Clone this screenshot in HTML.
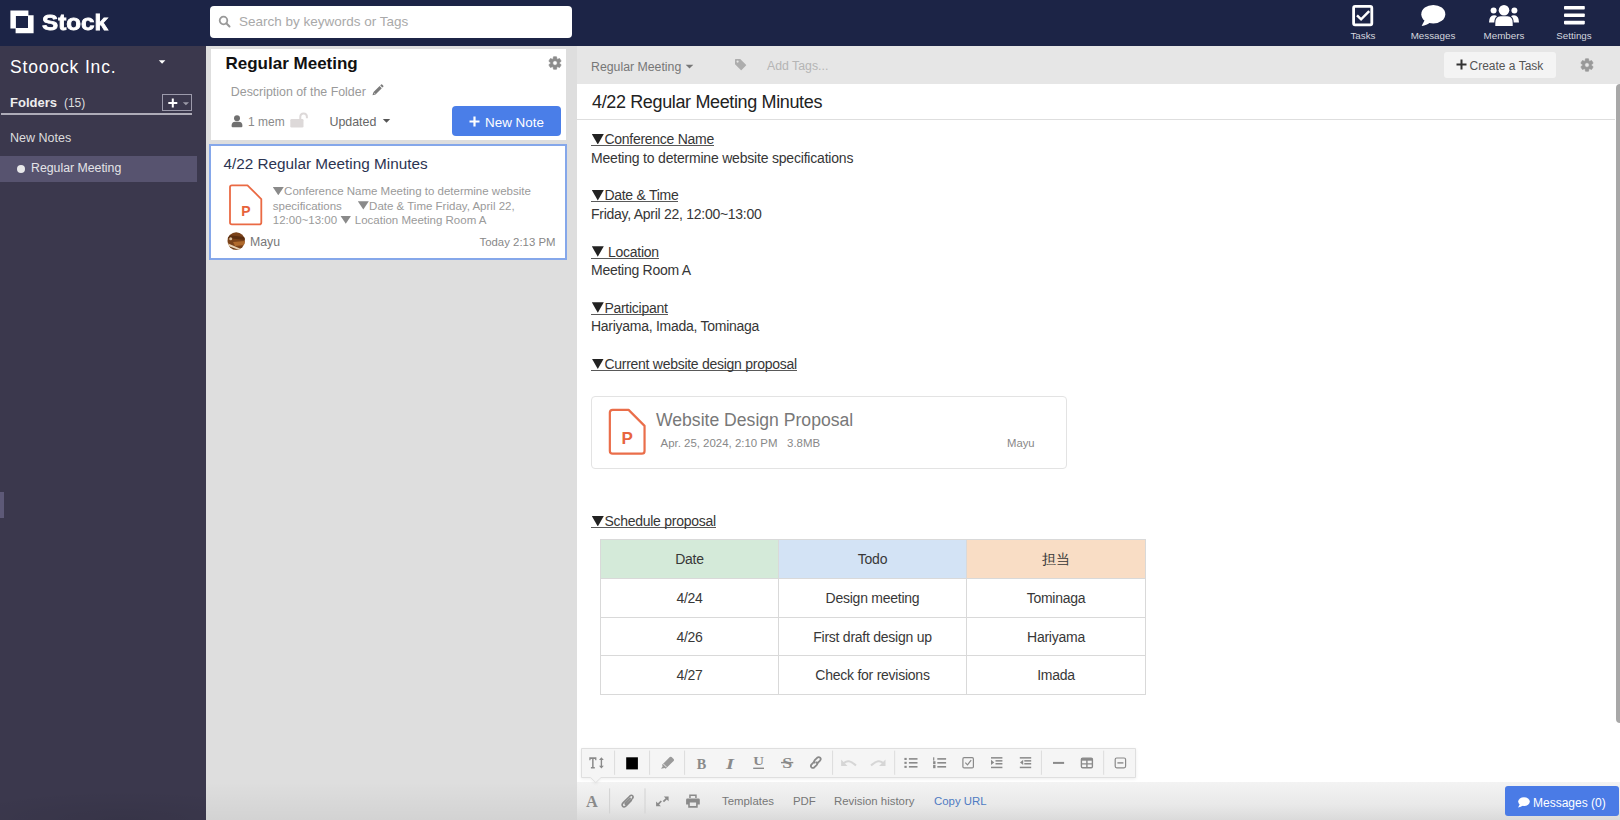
<!DOCTYPE html>
<html><head><meta charset="utf-8">
<style>
*{box-sizing:border-box;margin:0;padding:0}
html,body{width:1620px;height:820px;overflow:hidden;font-family:"Liberation Sans",sans-serif;background:#fff}
.a{position:absolute;white-space:nowrap;line-height:1}
svg.a{display:block}
#hdr{position:absolute;left:0;top:0;width:1620px;height:45.6px;background:#1c2446;z-index:5}
#side{position:absolute;left:0;top:45px;width:205.5px;height:775px;background:#3b384d}
#mid{position:absolute;left:205.5px;top:45px;width:371.5px;height:775px;background:#dedede}
#ed{position:absolute;left:577px;top:45px;width:1043px;height:775px;background:#fff}
.hl{font-size:9.8px;color:#d4d6df;text-align:center;width:70px}
.tri{display:inline-block;width:12px;height:10.5px;background:#222;clip-path:polygon(0 0,100% 0,50% 100%);margin-left:0.8px;margin-right:0.6px;vertical-align:-0.2px}
.tri2{display:inline-block;width:11px;height:8.2px;background:#8a8a8a;clip-path:polygon(0 0,100% 0,50% 100%);margin-right:0.3px;vertical-align:0px}
.body u{text-decoration:none;background:linear-gradient(#595959,#595959) 0 calc(100% - 0.9px)/100% 1.1px no-repeat}
.tbl{border-collapse:collapse;font-size:14px;letter-spacing:-0.25px;color:#383838}
.tbl td{border:1px solid #d9d9d9;text-align:center;height:38.5px;padding:0.8px 0 0 0}
</style></head>
<body>
<div id="hdr">
  <svg class="a" style="left:0;top:0" width="40" height="45" viewBox="0 0 40 45">
    <path fill="#fff" fill-rule="evenodd" d="M10.4 10.4H28.4V15.3H33.6V33.3H15.6V28.4H10.4Z M15.9 15.9H28V28H15.9Z"/>
  </svg>
  <div class="a" id="logo" style="left:42px;top:12px;font-size:22px;font-weight:bold;color:#fff;transform:scaleX(1.1);transform-origin:0 0;-webkit-text-stroke:0.8px #fff">Stock</div>
  <div class="a" style="left:210px;top:6px;width:362px;height:32px;background:#fff;border-radius:4px"></div>
  <svg class="a" style="left:218px;top:15px" width="14" height="14" viewBox="0 0 14 14"><circle cx="5.5" cy="5.5" r="3.8" fill="none" stroke="#999" stroke-width="1.8"/><path d="M8.3 8.3L11.5 11.5" stroke="#999" stroke-width="2" stroke-linecap="round"/></svg>
  <div class="a" style="left:239px;top:15px;font-size:13.5px;color:#a9a9a9">Search by keywords or Tags</div>

  <!-- Tasks -->
  <svg class="a" style="left:1350px;top:3px" width="26" height="26" viewBox="0 0 26 26"><rect x="3.6" y="3.4" width="18.2" height="18.4" rx="1.5" fill="none" stroke="#fff" stroke-width="2.8"/><path d="M7 12.3L11.1 16.3L19.2 8.2" fill="none" stroke="#fff" stroke-width="2.5"/></svg>
  <div class="a hl" style="left:1328px;top:30.6px">Tasks</div>
  <!-- Messages -->
  <svg class="a" style="left:1418px;top:2px" width="30" height="27" viewBox="0 0 30 27"><ellipse cx="15.3" cy="12.2" rx="12" ry="9.3" fill="#fff"/><path d="M7 17.5L3.6 23.9Q9 23.5 12 20.5Z" fill="#fff"/></svg>
  <div class="a hl" style="left:1398px;top:30.6px">Messages</div>
  <!-- Members -->
  <svg class="a" style="left:1486px;top:2px" width="36" height="27" viewBox="0 0 36 27"><circle cx="18" cy="8.2" r="5.3" fill="#fff"/><circle cx="7.6" cy="8.6" r="3" fill="#fff"/><circle cx="28.4" cy="8.6" r="3" fill="#fff"/><path d="M9.3 23.9V21Q9.3 14.3 14.5 14.3H21.5Q26.7 14.3 26.7 21V23.9Z" fill="#fff"/><path d="M3 20.5Q3 13.5 8 13.3Q10.3 13.3 11 14.2Q8.3 16 8.3 20.5Z" fill="#fff"/><path d="M33 20.5Q33 13.5 28 13.3Q25.7 13.3 25 14.2Q27.7 16 27.7 20.5Z" fill="#fff"/></svg>
  <div class="a hl" style="left:1469px;top:30.6px">Members</div>
  <!-- Settings -->
  <svg class="a" style="left:1560px;top:2px" width="30" height="27" viewBox="0 0 30 27"><rect x="4" y="4" width="20.8" height="3.6" rx="0.8" fill="#fff"/><rect x="4" y="11.4" width="20.8" height="3.6" rx="0.8" fill="#fff"/><rect x="4" y="18.8" width="20.8" height="3.6" rx="0.8" fill="#fff"/></svg>
  <div class="a hl" style="left:1539px;top:30.6px">Settings</div>
</div>

<div id="side">
  <div class="a" style="left:0;top:745px;width:206px;height:30px;background:radial-gradient(ellipse 180px 30px at 60% 100%,rgba(0,0,0,0.07),rgba(0,0,0,0))"></div>
  <div class="a" style="left:10px;top:13.5px;font-size:17.5px;color:#fff;letter-spacing:0.85px">Stooock Inc.</div>
  <svg class="a" style="left:158px;top:14px" width="8" height="6" viewBox="0 0 8 6"><path d="M0.8 1.2H7.4L4.1 4.8Z" fill="#fff"/></svg>
  <div class="a" style="left:10px;top:51px;font-size:13px;color:#eee"><b>Folders</b> <span style="font-size:12px;color:#ddd">&nbsp;(15)</span></div>
  <div class="a" style="left:162px;top:49px;width:30px;height:17px;border:1px solid #9c9aab"></div>
  <svg class="a" style="left:166px;top:51.5px" width="26" height="12" viewBox="0 0 26 12"><path d="M6.8 1.5V10.5M2.3 6H11.3" stroke="#fff" stroke-width="2"/><path d="M16.8 5.3H23L19.9 8.3Z" fill="#9c9aa8"/></svg>
  <div class="a" style="left:1px;top:68.2px;width:191px;height:1.8px;background:#aeacb8"></div>
  <div class="a" style="left:10px;top:87px;font-size:12.5px;color:#ddd">New Notes</div>
  <div class="a" style="left:0;top:111px;width:197px;height:25.5px;background:#57536f"></div>
  <div class="a" style="left:17px;top:120px;width:8px;height:8px;border-radius:50%;background:#e8e8ea"></div>
  <div class="a" style="left:31px;top:117px;font-size:12.3px;color:#e4e4e8">Regular Meeting</div>
  <div class="a" style="left:0;top:446.6px;width:4px;height:26px;background:#5d5977"></div>
</div>

<div id="mid">
  <div class="a" style="left:0;top:737px;width:372px;height:38px;background:linear-gradient(rgba(0,0,0,0),rgba(0,0,0,0.05))"></div>
  <div class="a" style="left:5.5px;top:3.5px;width:355.3px;height:91.5px;background:#fff"></div>
  <div class="a" style="left:20px;top:10.2px;font-size:17px;font-weight:bold;color:#111">Regular Meeting</div>
  <svg class="a" style="left:341.6px;top:10.2px" width="16" height="16" viewBox="0 0 16 16"><path fill="#8c8c8c" fill-rule="evenodd" stroke="#8c8c8c" stroke-width="0.7" stroke-linejoin="round" d="M6.00 4.19L6.50 1.78L9.50 1.78L10.00 4.19L10.30 4.36L12.64 3.59L14.14 6.19L12.30 7.83L12.30 8.17L14.14 9.81L12.64 12.41L10.30 11.64L10.00 11.81L9.50 14.22L6.50 14.22L6.00 11.81L5.70 11.64L3.36 12.41L1.86 9.81L3.70 8.17L3.70 7.83L1.86 6.19L3.36 3.59L5.70 4.36ZM10.30 8.00A2.3 2.3 0 1 0 5.70 8.00A2.3 2.3 0 1 0 10.30 8.00Z"/></svg>
  <div class="a" style="left:25.3px;top:41px;font-size:12.4px;color:#9a9a9a">Description of the Folder</div>
  <svg class="a" style="left:166px;top:39px" width="12" height="12" viewBox="0 0 12 12"><path d="M0.5 11.3L1.3 8.3L7.6 2L9.8 4.2L3.5 10.5Z M8.2 1.4L9.1 0.5Q9.6 0.1 10.1 0.5L11.3 1.7Q11.7 2.2 11.3 2.7L10.4 3.6Z" fill="#7a7a7a"/><path d="M1.8 8.6L3.2 10" stroke="#fff" stroke-width="0.6"/></svg>
  <svg class="a" style="left:25.4px;top:69.6px" width="12" height="13" viewBox="0 0 12 13"><circle cx="6" cy="3.2" r="3" fill="#707070"/><path d="M0.6 11.2V10.6Q0.6 6.8 4.2 6.8H7.8Q11.4 6.8 11.4 10.6V11.2Q11.4 12.2 10.4 12.2H1.6Q0.6 12.2 0.6 11.2Z" fill="#707070"/></svg>
  <div class="a" style="left:42.5px;top:71px;font-size:12px;color:#8a8a8a">1 mem</div>
  <svg class="a" style="left:84px;top:67px" width="19" height="17" viewBox="0 0 19 17"><rect x="0.3" y="7" width="13.2" height="8.5" rx="1.3" fill="#ddd9d9"/><path d="M10.3 7.2V5Q10.3 1.4 13.6 1.4Q16.9 1.4 16.9 5V6.2" fill="none" stroke="#ddd9d9" stroke-width="2"/></svg>
  <div class="a" style="left:124px;top:70.5px;font-size:12.4px;color:#666">Updated</div>
  <svg class="a" style="left:176px;top:73px" width="9" height="6" viewBox="0 0 9 6"><path d="M0.8 1H8.2L4.5 4.8Z" fill="#555"/></svg>
  <div class="a" style="left:246.5px;top:61px;width:109.3px;height:29.5px;background:#4a7ee8;border-radius:4px"></div>
  <svg class="a" style="left:263px;top:71px" width="11" height="11" viewBox="0 0 11 11"><path d="M5.5 0.5V10.5M0.5 5.5H10.5" stroke="#fff" stroke-width="2.2"/></svg>
  <div class="a" style="left:279.6px;top:70.5px;font-size:13.4px;color:#fff">New Note</div>

  <div class="a" style="left:3px;top:99px;width:358.5px;height:116px;background:#fff;border:2px solid #85a7ea"></div>
  <div class="a" style="left:18px;top:111px;font-size:15.3px;color:#2c3452">4/22 Regular Meeting Minutes</div>
  <svg class="a" style="left:22.3px;top:138px" width="36" height="44" viewBox="0 0 36 44"><path d="M3.9 2.3H19.5L33.3 16.1V39.4Q33.3 41.3 31.4 41.3H3.9Q2 41.3 2 39.4V4.2Q2 2.3 3.9 2.3Z" fill="#fff" stroke="#ea6a44" stroke-width="1.8" stroke-linejoin="round"/><text x="17.8" y="33.3" font-family="Liberation Sans" font-weight="bold" font-size="14" fill="#e7623b" text-anchor="middle">P</text></svg>
  <div class="a" style="left:67.3px;top:139.3px;font-size:11.5px;color:#9a9a9a;line-height:14.2px"><i class="tri2"></i>Conference Name Meeting to determine website<br>specifications&nbsp;&nbsp;&nbsp;&nbsp;&nbsp;<i class="tri2"></i>Date &amp; Time Friday, April 22,<br>12:00~13:00 <i class="tri2"></i> Location Meeting Room A</div>
  <svg class="a" style="left:21px;top:187px" width="18" height="18" viewBox="0 0 18 18"><defs><clipPath id="av"><circle cx="9.2" cy="9" r="8.7"/></clipPath></defs><g clip-path="url(#av)"><rect width="18" height="18" fill="#7a4219"/><path d="M0 3L18 5V8L0 6Z" fill="#5a2e10"/><path d="M6 10L18 9V13L8 14Z" fill="#b06a2c"/><path d="M0 11L14 17V18H0Z" fill="#e8d2b4"/><path d="M0 13.5L12 18H0Z" fill="#6a3a16"/><circle cx="3.7" cy="6.8" r="1.5" fill="#d8c0a0"/></g></svg>
  <div class="a" style="left:44.5px;top:191px;font-size:12.3px;color:#777">Mayu</div>
  <div class="a" style="left:274px;top:191.5px;font-size:11.4px;color:#888">Today 2:13 PM</div>
</div>
<div id="ed">
  <div class="a" style="left:0;top:0;width:1043px;height:38.5px;background:#e6e6e6"></div>
  <div class="a" style="left:14px;top:16px;font-size:12.3px;color:#777">Regular Meeting</div>
  <svg class="a" style="left:107.5px;top:18.5px" width="9" height="6" viewBox="0 0 9 6"><path d="M0.7 0.8H8.3L4.5 4.6Z" fill="#777"/></svg>
  <svg class="a" style="left:157px;top:13px" width="13" height="13" viewBox="0 0 13 13"><path d="M1 1.6Q1 1 1.6 1H6.2L12 6.8Q12.4 7.2 12 7.6L7.6 12Q7.2 12.4 6.8 12L1 6.2Z" fill="#adadad"/><circle cx="3.6" cy="3.6" r="1.1" fill="#e6e6e6"/></svg>
  <div class="a" style="left:190px;top:15px;font-size:12.3px;color:#b5b5b5">Add Tags...</div>
  <div class="a" style="left:867px;top:7px;width:112px;height:26px;background:#f4f4f4;border-radius:3px"></div>
  <svg class="a" style="left:879px;top:14px" width="11" height="11" viewBox="0 0 11 11"><path d="M5.5 0.5V10.5M0.5 5.5H10.5" stroke="#333" stroke-width="2"/></svg>
  <div class="a" style="left:892.5px;top:14.5px;font-size:12px;color:#555">Create a Task</div>
  <svg class="a" style="left:1001.7px;top:11.7px" width="16" height="16" viewBox="0 0 16 16"><path fill="#999" fill-rule="evenodd" stroke="#999" stroke-width="0.7" stroke-linejoin="round" d="M6.00 4.19L6.50 1.78L9.50 1.78L10.00 4.19L10.30 4.36L12.64 3.59L14.14 6.19L12.30 7.83L12.30 8.17L14.14 9.81L12.64 12.41L10.30 11.64L10.00 11.81L9.50 14.22L6.50 14.22L6.00 11.81L5.70 11.64L3.36 12.41L1.86 9.81L3.70 8.17L3.70 7.83L1.86 6.19L3.36 3.59L5.70 4.36ZM10.30 8.00A2.3 2.3 0 1 0 5.70 8.00A2.3 2.3 0 1 0 10.30 8.00Z"/></svg>

  <div class="a" style="left:15px;top:48.3px;font-size:18px;letter-spacing:-0.36px;color:#222">4/22 Regular Meeting Minutes</div>
  <div class="a" style="left:0;top:74px;width:1038px;height:1px;background:#dedede"></div>
  <div class="a" style="left:1039px;top:38.8px;width:8px;height:639.4px;background:#a8a8a8;border-radius:4.5px"></div>

  <div class="a body" style="left:14px;top:85.2px;font-size:14px;letter-spacing:-0.27px;color:#363636;line-height:18.72px">
    <u><i class="tri"></i>Conference Name</u><br><span style="letter-spacing:-0.2px">Meeting to determine website specifications</span><br><br>
    <u><i class="tri"></i>Date &amp; Time</u><br>Friday, April 22, 12:00~13:00<br><br>
    <u><i class="tri"></i>&nbsp;Location</u><br>Meeting Room A<br><br>
    <u><i class="tri"></i>Participant</u><br>Hariyama, Imada, Tominaga<br><br>
    <u><i class="tri"></i>Current website design proposal</u>
  </div>

  <div class="a" style="left:14px;top:351px;width:476px;height:73px;border:1px solid #e3e3e3;border-radius:4px;background:#fff"></div>
  <svg class="a" style="left:30px;top:362px" width="40" height="50" viewBox="0 0 40 50"><path d="M5.6 2.85H21.6L37.55 18.9V43.9Q37.55 46.65 34.8 46.65H5.6Q2.85 46.65 2.85 43.9V5.6Q2.85 2.85 5.6 2.85Z" fill="#fff" stroke="#ea6e4a" stroke-width="2.2" stroke-linejoin="round"/><text x="20.1" y="36.8" font-family="Liberation Sans" font-weight="bold" font-size="17" fill="#e8653e" text-anchor="middle">P</text></svg>
  <div class="a" style="left:79px;top:367px;font-size:17.6px;color:#787878">Website Design Proposal</div>
  <div class="a" style="left:83.5px;top:393px;font-size:11.45px;color:#888">Apr. 25, 2024, 2:10 PM&nbsp;&nbsp;&nbsp;3.8MB</div>
  <div class="a" style="left:430px;top:393px;font-size:11.3px;color:#888">Mayu</div>

  <div class="a body" style="left:14px;top:467.2px;font-size:14px;letter-spacing:-0.27px;color:#363636;line-height:18.72px"><u><i class="tri"></i>Schedule proposal</u></div>

  <table class="a tbl" style="left:23px;top:494px">
    <tr style="height:39px"><td style="background:#d4ead9;width:178px">Date</td><td style="background:#d3e3f5;width:188px">Todo</td><td style="background:#f9ddc5;width:179px">担当</td></tr>
    <tr><td>4/24</td><td>Design meeting</td><td>Tominaga</td></tr>
    <tr><td>4/26</td><td>First draft design up</td><td>Hariyama</td></tr>
    <tr><td>4/27</td><td>Check for revisions</td><td>Imada</td></tr>
  </table>

  <div class="a" style="left:0;top:736.7px;width:1043px;height:38.3px;background:linear-gradient(#f3f3f3,#e9e9e9 60%,#dadada)"></div>
  <svg class="a" style="left:0;top:695px" width="570" height="80" viewBox="577 740 570 80">
  <path d="M581.5 748.5H1135.5V777.5H601L595.8 782.6L590.6 777.5H581.5Z" fill="#f5f5f5" stroke="#dfdfdf" stroke-width="1" style="filter:drop-shadow(0 1.5px 1.5px rgba(0,0,0,0.07))"/>
  <g stroke="#dcdcdc" stroke-width="1"><path d="M614.6 750.6V774.8M649.6 750.6V774.8M684.6 750.6V774.8M832.6 750.6V774.8M894.7 750.6V774.8M1041.4 750.6V774.8M1103.7 750.6V774.8"/></g>
  <g fill="#8a8a8a">
    <path d="M589.3 757.3H596.4V760.3H595.3L595 758.9H593.6V767H594.8V768.5H590.9V767H592.1V758.9H590.7L590.4 760.3H589.3Z"/>
    <path d="M601.4 757.3L603.8 760.1H602.1V765.7H603.8L601.4 768.5L599 765.7H600.7V760.1H599Z"/>
  </g>
  <rect x="626.2" y="757.3" width="11.7" height="12.1" fill="#000"/>
  <path d="M661 768.8L662.8 765.9L661.9 765L669.8 757.1Q670.7 756.2 671.6 757.1L673.6 759.1Q674.5 760 673.6 760.9L665.7 768.8L664.8 767.9Z" fill="#9a9a9a"/>
  <path d="M663.3 763.9L666.8 767.4" stroke="#f5f5f5" stroke-width="0.9"/>
  <text x="696.7" y="768.5" font-family="Liberation Serif" font-weight="bold" font-size="15.5" fill="#8a8a8a" textLength="9.5" lengthAdjust="spacingAndGlyphs">B</text>
  <text x="726" y="768.5" font-family="Liberation Serif" font-style="italic" font-weight="bold" font-size="15.5" fill="#8a8a8a" textLength="8" lengthAdjust="spacingAndGlyphs">I</text>
  <text x="753.2" y="765.4" font-family="Liberation Serif" font-weight="bold" font-size="12.5" fill="#8a8a8a" textLength="10.7" lengthAdjust="spacingAndGlyphs">U</text>
  <rect x="753.2" y="767.6" width="10.8" height="1.4" fill="#8a8a8a"/>
  <text x="782.2" y="768.3" font-family="Liberation Serif" font-weight="bold" font-size="14" fill="#8a8a8a" textLength="10" lengthAdjust="spacingAndGlyphs">S</text>
  <rect x="781" y="761.9" width="12.3" height="1.4" fill="#8a8a8a"/>
  <g fill="none" stroke="#8a8a8a" stroke-width="1.8" stroke-linecap="round">
    <path d="M814.3 761.6L811.6 764.3Q810.2 765.9 811.5 767.3Q812.9 768.6 814.5 767.2L816.6 765.1Q818 763.6 816.8 762.3"/>
    <path d="M817.3 763.4L820 760.7Q821.4 759.1 820.1 757.7Q818.7 756.4 817.1 757.8L815 759.9Q813.6 761.4 814.8 762.7"/>
  </g>
  <g fill="none" stroke="#d6d6d6" stroke-width="2">
    <path d="M843.5 763.5Q848 758 856 765.5"/><path d="M883.5 763.5Q879 758 871 765.5"/>
  </g>
  <path d="M841.1 759.4V766H847.5Z" fill="#d6d6d6"/><path d="M885.5 759.4V766H879.1Z" fill="#d6d6d6"/>
  <g fill="#8a8a8a">
    <rect x="904.4" y="757.9" width="2.3" height="2.1"/><rect x="904.4" y="761.8" width="2.3" height="2.1"/><rect x="904.4" y="765.8" width="2.3" height="2.1"/>
    <rect x="908.9" y="758.1" width="8.6" height="1.6"/><rect x="908.9" y="762" width="8.6" height="1.6"/><rect x="908.9" y="766" width="8.6" height="1.6"/>
    <rect x="933.1" y="757.3" width="1.2" height="3.3"/><rect x="933.1" y="761.2" width="2.4" height="3"/><rect x="933.1" y="765" width="2.4" height="3.2"/>
    <rect x="937.3" y="758.1" width="8.8" height="1.6"/><rect x="937.3" y="762" width="8.8" height="1.6"/><rect x="937.3" y="766" width="8.8" height="1.6"/>
    <rect x="991" y="757.1" width="11.4" height="1.5"/><rect x="995.5" y="760.1" width="6.9" height="1.5"/><rect x="995.5" y="763" width="6.9" height="1.5"/><rect x="991" y="766.7" width="11.4" height="1.5"/>
    <path d="M991 759.8L994.2 762.4L991 765Z"/>
    <rect x="1019.8" y="757.1" width="11.4" height="1.5"/><rect x="1024.3" y="760.1" width="6.9" height="1.5"/><rect x="1024.3" y="763" width="6.9" height="1.5"/><rect x="1019.8" y="766.7" width="11.4" height="1.5"/>
    <path d="M1023.2 759.8L1020 762.4L1023.2 765Z"/>
    <rect x="1053" y="761.9" width="11.1" height="2"/>
  </g>
  <rect x="962.9" y="757.7" width="10.5" height="10.2" rx="1.2" fill="none" stroke="#8a8a8a" stroke-width="1.2"/>
  <path d="M965.3 762.6L967.5 764.8L971.2 760.2" fill="none" stroke="#8a8a8a" stroke-width="1.2"/>
  <rect x="1081.4" y="758.1" width="11" height="9.6" rx="1.2" fill="none" stroke="#8a8a8a" stroke-width="1.4"/>
  <rect x="1081.4" y="758.1" width="11" height="2.6" fill="#8a8a8a"/>
  <path d="M1081.4 763.9H1092.4M1086.9 760V767.7" stroke="#8a8a8a" stroke-width="1.4"/>
  <rect x="1115.2" y="758" width="10.4" height="9.8" rx="1.5" fill="none" stroke="#8a8a8a" stroke-width="1.2"/>
  <rect x="1117.4" y="762.2" width="6" height="1.4" fill="#8a8a8a"/>

  <text x="586" y="806.5" font-family="Liberation Serif" font-weight="bold" font-size="16" fill="#8a8a8a" textLength="11.8" lengthAdjust="spacingAndGlyphs">A</text>
  <g stroke="#d2d2d2" stroke-width="1"><path d="M609.6 788.4V813.5M645 788.4V813.5"/></g>
  <path d="M631.4 800.5L626.3 805.6Q624 807.9 622.6 806.3Q621.2 804.7 623.5 802.4L629.7 796.2Q631.4 794.6 632.6 795.8Q633.8 797 632.2 798.7L626.8 804.1Q626 804.9 625.4 804.3Q624.8 803.7 625.6 802.9L630.2 798.3" fill="none" stroke="#8a8a8a" stroke-width="1.6" stroke-linecap="round"/>
  <g fill="#8a8a8a">
    <path d="M662.8 801L665.6 798.2L663.8 796.4H668.6V801.2L666.8 799.4L664 802.2Z"/>
    <path d="M661.9 801.6L659.1 804.4L660.9 806.2H656.1V801.4L657.9 803.2L660.7 800.4Z"/>
  </g>
  <g fill="#8a8a8a">
    <path d="M689.2 794.4H696.7V798.1H695.2V795.9H690.7V798.1H689.2Z"/>
    <path d="M687.3 798.6H698.6Q699.8 798.6 699.8 799.8V804.6H697.7V807.7H688.2V804.6H686.1V799.8Q686.1 798.6 687.3 798.6ZM689.8 802.6V806.1H696.1V802.6Z"/>
  </g>
</svg>
    <div class="a" style="left:928px;top:741px;width:114px;height:30px;background:#4a7be6;border-radius:3px"></div>
  <svg class="a" style="left:940px;top:752px" width="13" height="11" viewBox="0 0 13 11"><ellipse cx="7" cy="4.6" rx="5.8" ry="4.3" fill="#fff"/><path d="M3 7L1 10.5Q4 10 6 8.5Z" fill="#fff"/></svg>
  <div class="a" style="left:956px;top:751.5px;font-size:12px;color:#fff">Messages (0)</div>

  <div class="a" style="left:145px;top:751px;font-size:11.4px;color:#777">Templates</div>
  <div class="a" style="left:216px;top:751px;font-size:11.4px;color:#777">PDF</div>
  <div class="a" style="left:257px;top:751px;font-size:11.4px;color:#777">Revision history</div>
  <div class="a" style="left:357px;top:751px;font-size:11.4px;color:#4f7bc2">Copy URL</div>
</div>
</body></html>
